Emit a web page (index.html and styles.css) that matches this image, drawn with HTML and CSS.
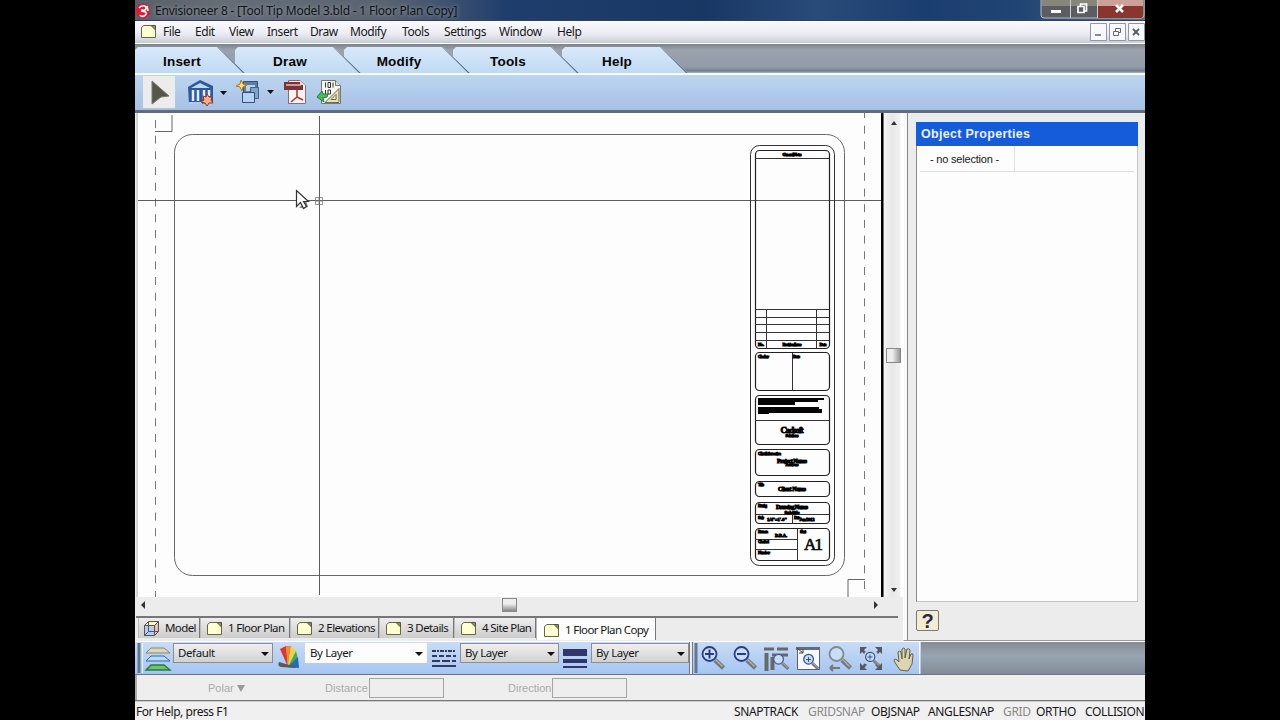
FILE: index.html
```html
<!DOCTYPE html>
<html lang="en">
<head>
<meta charset="utf-8">
<title>Envisioneer 8</title>
<link rel="stylesheet" href="styles.css">
</head>
<body>
<svg class="defs" width="0" height="0">
  <symbol id="sheet" viewBox="0 0 17 15"><path d="M1.500 3.500 4 1.500h9l2.500 3v9h-14z" fill="#ffffd2" stroke="#66664a"/><path d="M11 1.500h4.500V6z" fill="#8f8f60" stroke="#55553c"/></symbol>
  <symbol id="lens" viewBox="0 0 26 26"><path d="m15 15 8.500 8" stroke="#77777b" stroke-width="4.500"/><path d="m15.500 14.500 7 7" stroke="#b5b5b0" stroke-width="1.300"/><circle cx="9.500" cy="9" r="7" fill="#c9def6" stroke="currentColor" stroke-width="1.800"/></symbol>
</svg>
<div class="app">
  <header class="title">
    <svg width="16" height="18" viewBox="0 0 16 18"><path d="M2 3 8 1l6 3 1 8-6 5-7-3-1-6z" fill="#d32032"/><path d="M4 6c2-3 7-3 7 0s-4 3-4 1M6 9c3 1 6 0 5 3s-5 3-6 1M12 4l1 5" fill="none" stroke="#fff" stroke-width="1.600"/></svg>
    <span class="caption">Envisioneer 8 - [Tool Tip Model 3.bld - 1 Floor Plan Copy]</span>
    <div class="winbtns">
      <svg width="105" height="20" viewBox="0 0 105 20"><path d="M1 0v15q0 3 3 3h97q3 0 3-3V0" fill="#5b5d62" stroke="#b9bdc2"/><path d="M58 0v18h43q2 0 2-3V0z" fill="#8c342e"/><path d="M58 0h45v6H58z" fill="#cda19a"/><path d="M2 0h55v6H2z" fill="#87867b"/><path d="M30.500 0v18M57.500 0v18" stroke="#c9ccd0"/><path d="M11 10h10v3H11z" fill="#fff"/><path d="M38 6.500h6v6h-6zM40.500 6V4h6v7h-2" fill="none" stroke="#fff" stroke-width="1.700"/><path d="m76 5 7 7m0-7-7 7" stroke="#fff" stroke-width="2.500"/></svg>
    </div>
  </header>
  <nav class="menu">
    <svg width="17" height="15"><use href="#sheet"/></svg>
    <span class="m1">File</span><span class="m2">Edit</span><span class="m3">View</span><span class="m4">Insert</span><span class="m5">Draw</span><span class="m6">Modify</span><span class="m7">Tools</span><span class="m8">Settings</span><span class="m9">Window</span><span>Help</span>
    <div class="mdi">
      <svg width="55" height="18" viewBox="0 0 55 18"><path d="M.5.500h16v17H.500zM19.500.500h16v17h-16zM38.500.500h16v17h-16z" fill="#f7f9fc" stroke="#8d99a8"/><path d="M5 12h6" stroke="#626872" stroke-width="1.500"/><path d="M23.500 8.500h5v4h-5zM25.500 8V5.500h5v4h-2" fill="none" stroke="#626872"/><path d="m43 6 6 6m0-6-6 6" stroke="#555b66" stroke-width="1.800"/></svg>
    </div>
  </nav>
  <div class="ribbon">
    <div class="rtab first">Insert</div><div class="rtab second">Draw</div><div class="rtab third">Modify</div><div class="rtab fourth">Tools</div><div class="rtab">Help</div>
  </div>
  <div class="tools">
    <svg width="220" height="35" viewBox="136 75 220 35">
      <path d="M143 76h32v32h-32z" fill="#ececec"/><path d="m152 81 17 15-8 1-9 7z" fill="#55574b" stroke="#77786c"/>
      <g><path d="m188 87 12-7 13 6v16l-12 2h-12z" fill="#2e589c"/><path d="m191 88 9-5 10 5z" fill="#bcd8fa"/><path d="M193 90v11m5-11v11m6-11v9m5-9v6" stroke="#e0edff" stroke-width="2.500"/><path d="M189 103h13" stroke="#b5cbe8" stroke-width="2"/><path d="m207 94 2 3 3 0-1 3 2 3-4 0-2 3-2-3-4-1 3-2-1-4 3 1z" fill="#f4b083" stroke="#9c3423"/></g>
      <path d="M220 91h7l-3.500 4zM267 90h7l-3.500 4z" fill="#111"/>
      <g><path d="M243.500 81.500h14v13h-14z" fill="#607d9f" stroke="#345277"/><path d="M246 85h9v6h-9z" fill="#b7d4e9"/><path d="M250.500 87.500h8v11h-8z" fill="#7fa3cb" stroke="#3d618d"/><path d="M242.500 92.500h12v10h-12z" fill="#b5d3f7" stroke="#344f77"/><path d="m241 80 2 4 4 1-4 2-1 4-2-4-4-1 4-2z" fill="#ffe16d" stroke="#a9772c"/></g>
      <g><path d="M288.500 80.500h12l5 5v18h-17z" fill="#f8f2f2" stroke="#8c6b6b"/><path d="M284 82h19v8h-19z" fill="#7e3034"/><path d="M286 85h15" stroke="#c99" stroke-width="2"/><path d="M297 90v7l-6 5m6-5 6 3" fill="none" stroke="#b13832" stroke-width="1.600"/><path d="m300 80 5 5h-5z" fill="#ddd"/></g>
      <g><path d="M321.500 80.500h14l5 5v18h-19z" fill="#f8f8f2" stroke="#777"/><path d="M335.500 80.500v5h5" fill="#ddd" stroke="#777"/><path d="M325.500 82.500v5m2.500-5h2.500v5h-2.500zm5 0v5M325.500 90v4m2.500-4h2.500v4h-2.500z" fill="none" stroke="#333"/><path d="m325 102.500 14-14v14zm6-3h5v-5z" fill="#e6e0b4" fill-rule="evenodd" stroke="#6d6951"/><path d="m317 97 5-6 1 3h5l-1 3-4 1 1 4z" fill="#4fb65c" stroke="#277c36"/></g>
    </svg>
  </div>
  <div class="work">
    <main class="left">
      <div class="view">
        <svg class="paper" width="748" height="484" viewBox="136 113 748 484">
          <path d="M136 113h746v484H136" fill="#fdfdfd"/><path d="M136 113h2v484h-2z" fill="#d4d4d4"/><path d="M881 113h2.500v484H881z" fill="#000"/>
          <path d="M155.500 120V597M864.500 110V590" stroke="#777" stroke-dasharray="8 7.700"/>
          <path d="M155 131.500h17V115M848 597V579.500h17" fill="none" stroke="#666"/>
          <rect x="174.500" y="134.500" width="670" height="441" rx="18" fill="none" stroke="#686868"/>
          <path d="M138 200.500h743M319.500 116V595" stroke="#5c5c5c"/>
          <path d="M315.500 197.500h7v7h-7zM315 201h8M319 197v8" fill="none" stroke="#777" stroke-width=".8"/>
          <path d="m299 208 9-1-2-6z" fill="#777"/>
          <path d="m296.500 190.500 0 16 4-4 3 6 3-2-3-5h5z" fill="#fff" stroke="#333" stroke-width="1.200"/>
          <g fill="none" stroke="#333">
            <rect x="750.500" y="145.500" width="84" height="420" rx="9"/>
            <g stroke="#222" stroke-width="1.200"><rect x="755.500" y="150.500" width="74" height="198" rx="4"/><rect x="755.500" y="352.500" width="74" height="38" rx="4"/><rect x="755.500" y="395.500" width="74" height="49" rx="4"/><rect x="755.500" y="449.500" width="74" height="26" rx="4"/><rect x="755.500" y="481.500" width="74" height="15" rx="4"/><rect x="755.500" y="502.500" width="74" height="21" rx="4"/><rect x="755.500" y="528.500" width="74" height="32" rx="4"/></g>
            <path d="M755 158.500h74M755 309.500h74M755 317.500h74M755 324.500h74M755 332.500h74M755 340.500h74M766.500 309v39M816.500 309v39M792.500 353v37M755 420.500h74M755 514.500h74M792.500 514v9M797.500 529v31M755 539.500h42M755 549.500h42"/>
          </g>
          <path d="M758 398h66v2h-6v2h-23v3h-37zM758 407h61v2h3v4h-53v1h-11z" fill="#050505"/>
          <g class="ink" text-anchor="middle"><text x="792" y="155.500" textLength="19">General Notes</text><text x="761" y="345.500" textLength="6">No.</text><text x="792" y="345.500" textLength="19">Revision/Issue</text><text x="823" y="345.500" textLength="7">Date</text><text x="792" y="437" textLength="13">Solutions</text><text class="mid" x="792" y="433" textLength="23">Cadsoft</text><text class="name" x="792" y="463" textLength="30">Project Name</text><text x="792" y="466" textLength="13">Address</text><text class="name" x="792" y="491" textLength="28">Client Name</text><text class="name" x="792" y="509" textLength="32">Drawing Name</text><text x="792" y="513.500" textLength="15">Subtitle</text><text x="777" y="521" textLength="20">1/4"=1'-0"</text><text x="807" y="521" textLength="15">Jan/2012</text><text x="781" y="536.500" textLength="12">D.B.A.</text></g>
          <g class="ink"><text x="758" y="357.500" textLength="11">Checker</text><text x="793" y="357.500" textLength="7">Date</text><text x="758" y="454.500" textLength="23">Client Information</text><text x="758" y="485.500" textLength="6">Title</text><text x="758" y="507" textLength="9">Drawing</text><text x="758" y="519" textLength="6">Scale</text><text x="794" y="519" textLength="6">Date</text><text x="758" y="532.500" textLength="10">Drawn</text><text x="758" y="543" textLength="11">Checked</text><text x="758" y="553.500" textLength="12">Number</text><text x="800" y="532.500" textLength="6">Sheet</text></g>
          <text class="a1" x="804" y="550" textLength="19">A1</text>
        </svg>
        <div class="vscroll"><i class="up"></i><b></b><i class="down"></i></div>
      </div>
      <div class="hscroll"><i class="lt"></i><b></b><i class="rt"></i></div>
      <div class="sheets">
        <div class="stab t1"><svg width="17" height="17" viewBox="0 0 17 17"><path d="M1.500 5.500h10v10h-10z" fill="#b5cdf4"/><path d="m1.500 5.500 4-4h10l-4 4z" fill="#fff6bd"/><path d="m11.500 5.500 4-4v10l-4 4z" fill="#edbea9"/><path d="M1.500 5.500h10v10h-10zl4-4h10l-4 4m4-4v10l-4 4M5.500 2v9.500h10M5.500 11.500l-4 4" fill="none" stroke="#555"/></svg><span>Model</span></div>
        <div class="stab t2"><svg width="17" height="15"><use href="#sheet"/></svg><span>1 Floor Plan</span></div>
        <div class="stab t3"><svg width="17" height="15"><use href="#sheet"/></svg><span>2 Elevations</span></div>
        <div class="stab t4"><svg width="17" height="15"><use href="#sheet"/></svg><span>3 Details</span></div>
        <div class="stab t5"><svg width="17" height="15"><use href="#sheet"/></svg><span>4 Site Plan</span></div>
        <div class="stab on"><svg width="17" height="15"><use href="#sheet"/></svg><span>1 Floor Plan Copy</span></div>
      </div>
    </main>
    <aside class="side">
      <div class="props">
        <h2>Object Properties</h2>
        <div class="row"><span>- no selection -</span></div>
      </div>
      <div class="help">?</div>
    </aside>
  </div>
  <div class="format">
    <svg class="layers" width="38" height="32" viewBox="136 641 38 32"><path d="M140 642v30" stroke="#65758b" stroke-width="3"/><path d="M143.500 642v30" stroke="#e8f1ff"/><path d="m147 652 5-5h13l6 5z" fill="#ddd6bc" stroke="#8a8672"/><path d="m147 660 5-5h13l6 5z" fill="#b4dcf5" stroke="#3868a9"/><path d="m147 669 5-5h13l6 5z" fill="#72bf77" stroke="#277c3d" stroke-width="1.400"/></svg>
    <div class="combo c1">Default</div>
    <svg class="fan" width="24" height="26" viewBox="0 0 24 26"><path d="M11 23 3 5l6-3z" fill="#db3636"/><path d="M11 23 9 2h5z" fill="#f28a28"/><path d="m11 23 3-21 5 5z" fill="#e9d63d"/><path d="m11 23 8-16 2 8z" fill="#46a754"/><path d="m11 23 10-10 1 11z" fill="#276ab5"/><path d="m2 18 17 5-1 1-14-1q-4-1-2-5z" fill="#57595c"/></svg>
    <div class="combo white c2">By Layer</div>
    <svg class="lines" width="24" height="21" viewBox="0 0 24 21"><path d="M0 3h24" stroke="#30395f" stroke-width="2" stroke-dasharray="4 1 2 1"/><path d="M0 8h24" stroke="#30395f" stroke-width="2" stroke-dasharray="5 2"/><path d="M0 13h24" stroke="#30395f" stroke-width="2" stroke-dasharray="8 2"/><path d="M0 18h24" stroke="#30395f" stroke-width="2"/></svg>
    <div class="combo c3">By Layer</div>
    <svg class="lines" width="24" height="21" viewBox="0 0 24 21"><path d="M0 1h24v7H0zM0 11h24v4H0zM0 18h24v2H0z" fill="#30356a"/></svg>
    <div class="combo c4">By Layer</div>
    <svg class="zooms" width="232" height="32" viewBox="690 641 232 32">
      <path d="M690.500 641v32M693.500 641v32" stroke="#777"/><path d="M692 641v32" stroke="#eee" stroke-width="2"/><path d="M697 642v30" stroke="#627795" stroke-width="3"/>
      <g color="#263d86"><use href="#lens" x="701" y="644" width="26" height="26"/><path d="M706 653h9m-4.500-4.500v9" stroke="#263d86" stroke-width="2"/><use href="#lens" x="733" y="644" width="26" height="26"/><path d="M738 653h9" stroke="#263d86" stroke-width="2"/></g>
      <path d="M765 648h10m3 0h11M773 654h16" stroke="#66686e" stroke-width="3"/><path d="M767.500 652v18M773.500 656v13" stroke="#66686e" stroke-width="4"/><g color="#415c92"><use href="#lens" x="773" y="652" width="18" height="18"/></g>
      <path d="M798.500 648.500h22v20h-22z" fill="#f7f9fb" stroke="#5b6069"/><path d="M797 646h24v3h-24z" fill="#626c7a"/><path d="m798 647 6 5m-4 0h4v-4" fill="none" stroke="#444"/><g color="#31528b"><use href="#lens" x="803" y="652" width="18" height="18"/><path d="M807 658.500h5m-2.500-2.500v5" stroke="#31528b"/></g>
      <g color="#85888c"><use href="#lens" x="828" y="644" width="26" height="26"/></g><path d="M831 667h10m-10 0 3-3m-3 3 3 3" stroke="#777" stroke-width="2"/>
      <path d="m863 649 18 18m0-18-18 18" stroke="#555962" stroke-width="2.500"/><path d="M861 646h7l-7 7zm22 0h-7l7 7zm-22 23v-7l7 7zm22 0h-7l7-7z" fill="#555962"/><circle cx="872" cy="657" r="8" fill="#b9d1f0"/><g color="#31528b"><use href="#lens" x="865" y="650" width="17" height="17"/><path d="M868.500 656h5m-2.500-2.500v5" stroke="#31528b"/></g>
      <path d="m901 669-6-9q0-3 3-1l2 2-1-10q2-2 3 0l1 7v-10q2-2 3 0v9l2-9q2-1 3 1l-1 9 2-5q2-1 2 1l-1 9-4 7z" fill="#ddd5af" stroke="#625f4b"/><path d="M920.500 641v32" stroke="#fff"/>
    </svg>
  </div>
  <div class="coords"><span class="polar">Polar <i></i></span><span class="dist">Distance</span><b></b><span class="dir">Direction</span><b></b></div>
  <footer class="status">
    <span class="tip">For Help, press F1</span>
    <span class="s1">SNAPTRACK</span><span class="s2 off">GRIDSNAP</span><span class="s3">OBJSNAP</span><span class="s4">ANGLESNAP</span><span class="s5 off">GRID</span><span class="s6">ORTHO</span><span class="s7">COLLISION</span>
  </footer>
</div>
</body>
</html>
```

FILE: styles.css
```css
* { box-sizing: border-box; }
body { margin: 0; background: #000; height: 720px; overflow: hidden; font: 12px/16px "Noto Sans", "Open Sans", sans-serif; color: #171717; }
svg { display: block; flex: none; }
.defs { height: 0; }
span { white-space: nowrap; }
.app { width: 1010px; height: 720px; margin-left: 135px; display: flex; flex-direction: column; overflow: hidden; background: #ececec; }
.app > * { flex: none; }

.title { height: 21px; display: flex; padding-top: 1px; border-bottom: 1px solid #34405a; background: linear-gradient(90deg, #596069 0, #656d77 90px, #59636f 250px, #3d516f 315px, #203e6d 370px, #193763 570px, #294b7a 680px, #1b3e70 790px, #214574 890px, #687380 1010px); }
.title svg { margin-top: 1px; }
.caption { margin-left: 4px; width: 303px; line-height: 20px; letter-spacing: -.21px; color: #101318; text-shadow: 0 0 4px #a0a6ad; }
.winbtns { margin-left: auto; margin-right: 0; margin-top: -2px; }

.menu { height: 23px; display: flex; padding: 2px 0 0 5px; background: linear-gradient(#fafafd 0, #edeef5 12px, #d9dbe3 18px, #c9cbd2 22px, #fff 22px); }
.menu > svg { margin: 1px 6px 0 0; }
.menu span { line-height: 18px; letter-spacing: -.45px; }
.m1 { width: 32px; }
.m2 { width: 34px; }
.m3 { width: 38px; }
.m4 { width: 43px; }
.m5 { width: 40px; }
.m6 { width: 52px; }
.m7 { width: 42px; }
.m8 { width: 55px; }
.m9 { width: 58px; }
.mdi { margin-left: auto; width: 55px; }

.ribbon { height: 31px; padding-top: 3px; display: flex; border-bottom: 2px solid #f5fbff; background: linear-gradient(#7e8389 0, #9aa2ad 6px, #929ca8 23px, #747d88 27px, #aeb9c4 29px); }
.rtab { position: relative; width: 126px; margin-left: -17px; height: 26px; padding-right: 16px; text-align: center; font: bold 13.500px/29px "Liberation Sans", sans-serif; letter-spacing: .2px; color: #050505; background: linear-gradient(#d9e9fa, #c0daf2); clip-path: polygon(0 3px, 3px 0, 99px 0, 126px 26px, 0 26px); }
.rtab::after { content: ""; position: absolute; right: 0; top: 0; width: 28px; height: 26px; background: #5f7186; clip-path: polygon(0 0, 1px 0, 28px 26px, 26px 26px); }
.rtab.first { z-index: 4; margin-left: 0; width: 110px; clip-path: polygon(0 3px, 3px 0, 83px 0, 110px 26px, 0 26px); }
.rtab.second { z-index: 3; margin-left: -10px; }
.rtab.third { z-index: 2; }
.rtab.fourth { z-index: 1; }
.tools { height: 38px; padding-left: 1px; border-bottom: 3px solid #626b7b; background: linear-gradient(#bbd5ef, #a8c1e6); }

.work { height: 528px; display: flex; }
.left { width: 768px; padding-left: 1px; display: flex; flex-direction: column; }
.view { height: 484px; display: flex; }
.vscroll { width: 19px; display: flex; flex-direction: column; justify-content: space-between; align-items: center; padding: 8px 0 5px; background: linear-gradient(90deg, #f5f5f5, #e7e7e7 8px, #f1f1f1 16px, #fff 17px); }
.vscroll b { width: 15px; height: 15px; margin-top: -2px; background: linear-gradient(90deg, #eee 40%, #999); border: 1px solid #888; }
.up, .down { border: 3px solid transparent; }
.up { border-top: 0; border-bottom: 4px solid #333; }
.down { border-bottom: 0; border-top: 4px solid #333; }
.hscroll { height: 21px; width: 762px; display: flex; align-items: center; justify-content: space-between; padding: 0 20px 3px 5px; background: #ececec; border-bottom: 2px solid #777; }
.hscroll b { width: 15px; height: 14px; background: linear-gradient(#eee 40%, #888); border: 1px solid #888; }
.lt, .rt { border: 4px solid transparent; }
.lt { border-left: 0; border-right: 4px solid #333; }
.rt { border-right: 0; border-left: 4px solid #333; }
.sheets { height: 23px; padding-left: 2px; display: flex; }
.stab { height: 20px; display: flex; align-items: center; padding-left: 5px; font-size: 11.500px; line-height: 16px; letter-spacing: -.6px; background: linear-gradient(#eee, #ddd 10px, #cdcdcd); border-right: 1px solid #777; border-left: 1px solid #bbb; }
.stab svg { margin-right: 5px; }
.t1 { width: 62px; padding-left: 4px; }
.t2 { width: 90px; }
.t3 { width: 89px; }
.t4 { width: 75px; }
.t5 { width: 82px; }
.stab.on { width: 120px; height: 22px; padding: 2px 0 0 6px; background: #fdfdfd; }
.side { width: 242px; height: 528px; border-left: 1px solid #fff; padding: 9px 7px 0 8px; background: #ececec; box-shadow: inset 3px 0 #f8f8f8, inset 4px 0 #888; border-bottom: 1px solid #999; }
.props { height: 480px; margin-left: 4px; background: #fdfdfd; border: 1px solid #c5c5c5; border-left-color: #888; }
.props h2 { margin: -1px; height: 24px; padding-left: 5px; background: #155cda; color: #e8f2ff; font: bold 12.500px/24px "Liberation Sans", sans-serif; letter-spacing: .3px; }
.row { margin: 1px 3px 0; height: 26px; border-bottom: 1px solid #ddd; display: flex; }
.row span { width: 95px; padding-left: 10px; border-right: 1px solid #e0e0e0; font: 11px/26px "Liberation Sans", sans-serif; letter-spacing: -.2px; }
.help { width: 23px; height: 21px; margin: 8px 0 0 4px; border: 1px solid #777; border-radius: 2px; text-align: center; font: bold 20px/20px "Liberation Sans", sans-serif; color: #272552; background: #f4eed1; }

.format { height: 34px; border-top: 1px solid #fff; border-bottom: 1px solid #6e747e; display: flex; background: linear-gradient(#c8dcf4, #a5c5f2); }
.combo { position: relative; height: 20px; margin-top: 1px; padding-left: 4px; border: 1px solid #8c8e92; background: linear-gradient(#f0f0f0, #d1d1d1); font-size: 11.500px; line-height: 17px; letter-spacing: -.4px; }
.combo::after { content: ""; position: absolute; right: 3px; top: 8px; border: 4px solid transparent; border-bottom: 0; border-top-color: #111; }
.white { background: #fdfdfd; border-color: #fdfdfd; }
.c1 { width: 100px; }
.c2 { width: 122px; }
.c3 { width: 99px; }
.c4 { width: 98px; }
.fan { margin: 2px 4px 0 4px; }
.lines { margin: 6px 4px 0 5px; }
.format .zooms { margin-left: 0; }
.format .c3 + .lines { margin-left: 4px; }
.format::after { content: ""; flex: 1; background: linear-gradient(#858d94, #98a4b2 14px, #838c99); }

.coords { height: 26px; display: flex; align-items: center; padding-left: 73px; border-bottom: 1px solid #777; color: #aaa; background: #eee; font: 11px/16px "Liberation Sans", sans-serif; box-shadow: inset 2px 0 #aaa; }
.coords b { width: 75px; height: 20px; border: 1px solid #a5a5a5; margin-left: 2px; }
.coords i { display: inline-block; border: 4px solid transparent; border-top: 7px solid #999; border-bottom: 0; }
.polar { width: 117px; }
.dist { width: 42px; }
.dir { width: 42px; margin-left: 64px; }
.status { height: 19px; display: flex; background: #f0f0f0; border-top: 1px solid #ccc; line-height: 20px; }
.status span { letter-spacing: -.35px; }
.status .tip { width: 599px; padding-left: 1px; letter-spacing: -.45px; }
.status .off { color: #888; }
.s1 { width: 74px; }
.s2 { width: 63px; }
.s3 { width: 57px; }
.s4 { width: 75px; }
.s5 { width: 33px; }
.s6 { width: 49px; }
.s7 { width: 60px; }

.ink { font: bold 4.500px "Liberation Serif", serif; fill: #000; stroke: #000; stroke-width: .9px; }
.ink .mid { font-size: 9px; }
.ink .name { font-size: 6px; }
.a1 { font: 17px "Liberation Serif", serif; stroke: #111; stroke-width: .7px; }
```
